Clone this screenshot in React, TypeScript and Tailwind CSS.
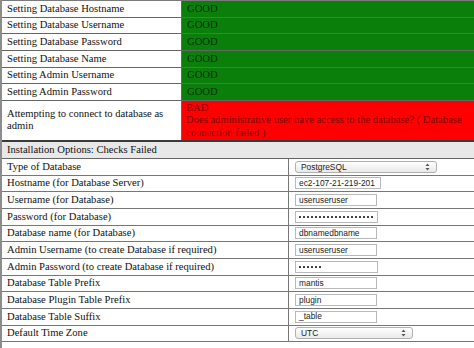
import React from "react";

const serif = { fontFamily: '"Liberation Serif", "Times New Roman", serif' };

function Arrows() {
  return (
    <svg width="5" height="8" viewBox="0 0 5 8" className="shrink-0">
      <path d="M2.5 0.5 L4.5 3 L0.5 3 Z" fill="#555" />
      <path d="M2.5 7.5 L4.5 5 L0.5 5 Z" fill="#555" />
    </svg>
  );
}

function TextBox({ value, w = "w-[82px]" }: { value: string; w?: string }) {
  return (
    <div
      className={`${w} h-[12px] border border-[#b8b8b8] bg-white px-[3px] flex items-center overflow-hidden whitespace-nowrap text-[8.4px] leading-none text-[#222]`}
      style={{ fontFamily: '"Liberation Sans", Arial, sans-serif' }}
    >
      {value}
    </div>
  );
}

function Dots({ n }: { n: number }) {
  return (
    <div className="w-[83px] h-[12px] border border-[#b8b8b8] bg-white px-[3px] flex items-center gap-[2px] overflow-hidden">
      {Array.from({ length: n }).map((_, i) => (
        <span key={i} className="block w-[2px] h-[2px] rounded-[0.5px] bg-[#333] shrink-0" />
      ))}
    </div>
  );
}

function Select({ value, w }: { value: string; w: string }) {
  return (
    <div
      className={`${w} h-[12px] border border-[#b0b0b0] rounded-[3px] bg-linear-to-b from-white to-[#e9e9e9] pl-[5px] pr-[6px] flex items-center justify-between text-[8.4px] leading-none text-[#222]`}
      style={{ fontFamily: '"Liberation Sans", Arial, sans-serif' }}
    >
      <span>{value}</span>
      <Arrows />
    </div>
  );
}

const checks = [
  "Setting Database Hostname",
  "Setting Database Username",
  "Setting Database Password",
  "Setting Database Name",
  "Setting Admin Username",
  "Setting Admin Password",
];

type Opt = { label: string; field: React.ReactNode };

const options: Opt[] = [
  { label: "Type of Database", field: <Select value="PostgreSQL" w="w-[142px]" /> },
  { label: "Hostname (for Database Server)", field: <TextBox value="ec2-107-21-219-201" w="w-[86px]" /> },
  { label: "Username (for Database)", field: <TextBox value="useruseruser" /> },
  { label: "Password (for Database)", field: <Dots n={19} /> },
  { label: "Database name (for Database)", field: <TextBox value="dbnamedbname" /> },
  { label: "Admin Username (to create Database if required)", field: <TextBox value="useruseruser" /> },
  { label: "Admin Password (to create Database if required)", field: <Dots n={6} /> },
  { label: "Database Table Prefix", field: <TextBox value="mantis" /> },
  { label: "Database Plugin Table Prefix", field: <TextBox value="plugin" /> },
  { label: "Database Table Suffix", field: <TextBox value="_table" /> },
  { label: "Default Time Zone", field: <Select value="UTC" w="w-[118px]" /> },
];

export default function App() {
  return (
    <div className="w-[474px] h-[348px] overflow-hidden bg-white">
      <div
        className="border-l-2 border-[#8c8c8c] text-[10.6px] leading-[12.3px] text-[#111]"
        style={serif}
      >
        {/* Checks table */}
        <div className="border-t border-[#7a7a7a]">
          {checks.map((c) => (
            <div key={c} className="flex h-[16.67px] border-b border-[#666]">
              <div className="w-[180px] border-r border-[#666] pl-[5px] flex items-center whitespace-nowrap">
                {c}
              </div>
              <div className="flex-1 bg-[#0a800a] text-[#022e02] pl-[5px] flex items-center">
                GOOD
              </div>
            </div>
          ))}
          <div className="flex h-[41px] border-b-2 border-[#3a3a3a]">
            <div className="w-[180px] border-r border-[#666] pl-[5px] pr-[4px] flex items-center">
              Attempting to connect to database as admin
            </div>
            <div className="flex-1 bg-[#ff0000] text-[#7a0808] pl-[4px] pr-[6px] pt-[1px]">
              BAD
              <br />
              Does administrative user have access to the database? ( Database connection failed )
            </div>
          </div>
        </div>

        {/* Options table */}
        <div className="h-[17px] bg-[#e8e8e8] border-b border-[#666] pl-[5px] flex items-center">
          Installation Options: Checks Failed
        </div>
        {options.map((o) => (
          <div key={o.label} className="flex h-[16.67px] border-b border-[#777]">
            <div className="w-[287px] border-r border-[#777] pl-[5px] flex items-center whitespace-nowrap">
              {o.label}
            </div>
            <div className="flex-1 pl-[6px] flex items-center">{o.field}</div>
          </div>
        ))}
        <div className="h-[16.67px]" />
      </div>
    </div>
  );
}
